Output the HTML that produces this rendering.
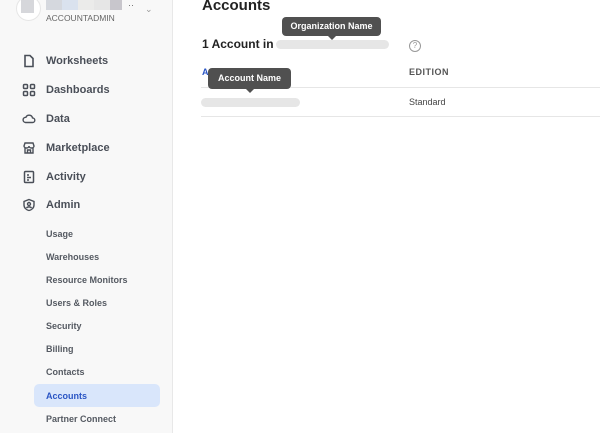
<!DOCTYPE html><html><head><style>
body{margin:0;width:600px;height:433px;background:#fff;font-family:"Liberation Sans",sans-serif;position:relative;overflow:hidden}
.a{position:absolute}
.side{left:0;top:0;width:172px;height:433px;background:#f8f8f8;border-right:1px solid #e8e8e8}
.nav{position:absolute;left:46px;font-size:11px;font-weight:bold;color:#4a4f58;transform:translateY(-50%)}
.sub{position:absolute;left:46px;font-size:9px;font-weight:bold;color:#555a62;transform:translateY(-50%)}
.ic{position:absolute;left:22px;width:14px;height:14px;transform:translateY(-50%)}
.tip{position:absolute;background:#505050;color:#fff;font-size:9px;font-weight:bold;border-radius:4px;text-align:center}
.tip:after{content:"";position:absolute;bottom:-4px;left:50%;margin-left:-4px;border:4px solid transparent;border-bottom:0;border-top-color:#505050}
.bar{position:absolute;background:#e6e6e6;border-radius:5px}
</style></head><body>
<div class="a side"></div>
<div class="a" style="left:16px;top:-4px;width:23px;height:23px;border:1px solid #e6e6e6;border-radius:50%;background:#fff"></div>
<div class="a" style="left:21px;top:0;width:13px;height:13px;background:#d6d7db"></div>
<div class="a" style="left:46px;top:0;width:76px;height:10px;background:linear-gradient(90deg,#d5d8de 0 16px,#dae2ee 16px 32px,#ebebea 32px 48px,#e6e6e6 48px 64px,#c8c6cc 64px 76px)"></div>
<div class="a" style="left:128px;top:0;font-size:9px;color:#666">··</div>
<div class="a" style="left:145px;top:4px;font-size:9px;color:#999">⌄</div>
<div class="a" style="left:46px;top:13px;font-size:8.5px;color:#666">ACCOUNTADMIN</div>

<svg class="ic" style="top:61px" viewBox="0 0 14 14" fill="none" stroke="#4a4f58" stroke-width="1.6"><path d="M3 1.5h5l3 3v8H3z"/></svg>
<svg class="ic" style="top:90px" viewBox="0 0 14 14" fill="none" stroke="#4a4f58" stroke-width="1.5"><rect x="1.5" y="1.5" width="4" height="4" rx="1"/><rect x="8.5" y="1.5" width="4" height="4" rx="1"/><rect x="1.5" y="8.5" width="4" height="4" rx="1"/><rect x="8.5" y="8.5" width="4" height="4" rx="1"/></svg>
<svg class="ic" style="top:119px" viewBox="0 0 14 14" fill="none" stroke="#4a4f58" stroke-width="1.4"><path d="M3.5 10.5h7a2.3 2.3 0 0 0 0-4.6 3.5 3.5 0 0 0-6.6-.6A2.6 2.6 0 0 0 3.5 10.5z"/></svg>
<svg class="ic" style="top:148px" viewBox="0 0 14 14" fill="none" stroke="#4a4f58" stroke-width="1.4"><path d="M2 5l1-3h8l1 3c0 1-1 2-2.5 2S7 6 7 5c0 1-1 2-2.5 2S2 6 2 5zM3 7v5h8V7M5.5 12V9h3v3"/></svg>
<svg class="ic" style="top:177px" viewBox="0 0 14 14" fill="none" stroke="#4a4f58" stroke-width="1.5"><rect x="2.5" y="1.5" width="9" height="11" rx="1"/><path d="M5 5h2M5 7.5h4M5 10h2"/></svg>
<svg class="ic" style="top:205px" viewBox="0 0 14 14" fill="none" stroke="#4a4f58" stroke-width="1.4"><path d="M7 1.5l5 2v3.5c0 3-2.5 5-5 5.5-2.5-.5-5-2.5-5-5.5V3.5z"/><circle cx="7" cy="6" r="1.5"/><path d="M4.5 10c1-1.5 4-1.5 5 0"/></svg>
<div class="nav" style="top:61px">Worksheets</div>
<div class="nav" style="top:90px">Dashboards</div>
<div class="nav" style="top:119px">Data</div>
<div class="nav" style="top:148px">Marketplace</div>
<div class="nav" style="top:177px">Activity</div>
<div class="nav" style="top:205px">Admin</div>
<div class="a" style="left:34px;top:384px;width:126px;height:23px;background:#d9e6fb;border-radius:5px"></div>
<div class="sub" style="top:234px">Usage</div>
<div class="sub" style="top:257px">Warehouses</div>
<div class="sub" style="top:280px">Resource Monitors</div>
<div class="sub" style="top:303px">Users &amp; Roles</div>
<div class="sub" style="top:326px">Security</div>
<div class="sub" style="top:349px">Billing</div>
<div class="sub" style="top:372px">Contacts</div>
<div class="sub" style="top:396px;color:#2a55c4">Accounts</div>
<div class="sub" style="top:419px">Partner Connect</div>

<div class="a" style="left:202px;top:-3px;font-size:15px;font-weight:bold;color:#222">Accounts</div>
<div class="a" style="left:202px;top:37px;font-size:12px;font-weight:bold;color:#222">1 Account in</div>
<div class="bar" style="left:276px;top:40px;width:113px;height:9px"></div>
<div class="a" style="left:409px;top:40px;width:10px;height:10px;border:1px solid #999;border-radius:50%;font-size:8px;color:#999;text-align:center;line-height:10px">?</div>
<div class="a" style="left:202px;top:67px;font-size:9px;font-weight:bold;color:#2a55c4;letter-spacing:.5px">ACCOUNT ↑</div>
<div class="a" style="left:409px;top:67px;font-size:9px;font-weight:bold;color:#555;letter-spacing:.5px">EDITION</div>
<div class="a" style="left:201px;top:87px;width:399px;height:1px;background:#e6e6e6"></div>
<div class="bar" style="left:201px;top:98px;width:99px;height:9px"></div>
<div class="a" style="left:409px;top:97px;font-size:9px;color:#444">Standard</div>
<div class="a" style="left:201px;top:116px;width:399px;height:1px;background:#e6e6e6"></div>
<div class="tip" style="left:282px;top:17px;width:99px;height:19px;line-height:19px">Organization Name</div>
<div class="tip" style="left:208px;top:68px;width:83px;height:21px;line-height:21px">Account Name</div>
</body></html>
